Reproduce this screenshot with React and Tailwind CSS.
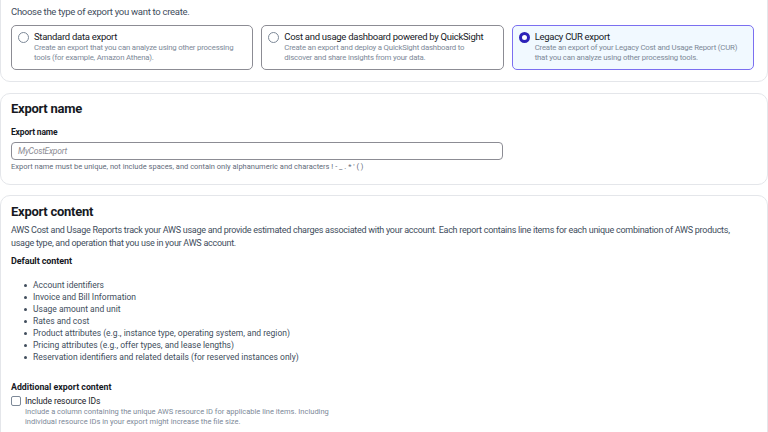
import React from "react";

const font = { fontFamily: '"Roboto", "Liberation Sans", sans-serif' };

const tiles = [
  {
    title: "Standard data export",
    desc: "Create an export that you can analyze using other processing tools (for example, Amazon Athena).",
  },
  {
    title: "Cost and usage dashboard powered by QuickSight",
    desc: "Create an export and deploy a QuickSight dashboard to discover and share insights from your data.",
    narrow: true,
  },
  {
    title: "Legacy CUR export",
    desc: "Create an export of your Legacy Cost and Usage Report (CUR) that you can analyze using other processing tools.",
    selected: true,
  },
];

const defaults = [
  "Account identifiers",
  "Invoice and Bill Information",
  "Usage amount and unit",
  "Rates and cost",
  "Product attributes (e.g., instance type, operating system, and region)",
  "Pricing attributes (e.g., offer types, and lease lengths)",
  "Reservation identifiers and related details (for reserved instances only)",
];

function Tile({ title, desc, selected, narrow }) {
  return (
    <div
      className={
        "flex h-[45px] gap-[5px] rounded-[5px] border pl-[6px] pr-[6px] pt-[5px] " +
        (selected ? "border-[#7b6ff0] bg-[#f1f9ff]" : "border-[#8c8c94] bg-white")
      }
    >
      <div className="pt-[1px]">
        {selected ? (
          <div className="h-[11px] w-[11px] rounded-full border-[3.5px] border-[#2d22b8] bg-white" />
        ) : (
          <div className="h-[11px] w-[11px] rounded-full border border-[#7d8998] bg-white" />
        )}
      </div>
      <div className="min-w-0">
        <div className="text-[9.5px] leading-[12px] tracking-[-0.03em] text-[#16191f]">{title}</div>
        <div
          className={
            "text-[7.8px] leading-[10px] tracking-[-0.025em] text-[#7d8998] " + (narrow ? "max-w-[190px]" : "")
          }
        >
          {desc}
        </div>
      </div>
    </div>
  );
}

export default function App() {
  return (
    <div className="min-h-screen w-full overflow-hidden bg-white" style={font}>
      {/* export type */}
      <section className="-mt-[10px] rounded-[10px] border border-[#e4e6ea] pb-[11px] pl-[10px] pr-[13px] pt-[14px]">
        <p className="text-[9.5px] leading-[14px] tracking-[-0.03em] text-[#414d5c]">
          Choose the type of export you want to create.
        </p>
        <div className="mt-[6px] grid grid-cols-3 gap-[8px]">
          {tiles.map((t) => (
            <Tile key={t.title} {...t} />
          ))}
        </div>
      </section>

      {/* export name */}
      <section className="mt-[11px] rounded-[10px] border border-[#e4e6ea] px-[10px] pb-[11px] pt-[6px]">
        <h2 className="text-[13px] font-bold leading-[18px] tracking-[-0.02em] text-[#16191f]">Export name</h2>
        <div className="mt-[8px] text-[8.5px] font-bold leading-[12px] tracking-[-0.02em] text-[#16191f]">
          Export name
        </div>
        <div className="mt-[4px] flex h-[18px] w-[492px] items-center rounded-[4px] border border-[#8c8c94] pl-[6px]">
          <span className="text-[8.5px] italic tracking-[-0.03em] text-[#8c8c94]">MyCostExport</span>
        </div>
        <p className="mt-[1px] text-[7.5px] leading-[12px] text-[#5f6b7a]">
          Export name must be unique, not include spaces, and contain only alphanumeric and characters ! - _ . * ' ( )
        </p>
      </section>

      {/* export content */}
      <section className="mt-[10px] rounded-t-[10px] border border-[#e4e6ea] px-[10px] pb-[10px] pt-[7px]">
        <h2 className="text-[13px] font-bold leading-[18px] tracking-[-0.02em] text-[#16191f]">Export content</h2>
        <p className="mt-[3px] pr-[12px] text-[9px] leading-[13px] tracking-[-0.03em] text-[#414d5c]">
          AWS Cost and Usage Reports track your AWS usage and provide estimated charges associated with your account. Each report contains line items for each unique combination of AWS products, usage type, and operation that you use in your AWS account.
        </p>
        <div className="mt-[5px] text-[9px] font-bold leading-[12px] tracking-[-0.01em] text-[#16191f]">
          Default content
        </div>
        <ul className="mt-[12px]">
          {defaults.map((d) => (
            <li key={d} className="flex items-center gap-[6px] pl-[13px] text-[8.5px] leading-[12px] text-[#414d5c]">
              <span className="h-[3px] w-[3px] shrink-0 rounded-full bg-[#414d5c]" />
              {d}
            </li>
          ))}
        </ul>
        <div className="mt-[18px] text-[8.8px] font-bold leading-[12px] text-[#16191f]">
          Additional export content
        </div>
        <div className="mt-[2px] flex gap-[4px]">
          <div className="mt-[1px] h-[10px] w-[10px] rounded-[2px] border border-[#7d8998] bg-white" />
          <div>
            <div className="text-[8.5px] leading-[12px] tracking-[-0.01em] text-[#16191f]">Include resource IDs</div>
            <p className="w-[315px] text-[7.5px] leading-[10px] text-[#7d8998]">
              Include a column containing the unique AWS resource ID for applicable line items. Including individual resource IDs in your export might increase the file size.
            </p>
          </div>
        </div>
      </section>
    </div>
  );
}
